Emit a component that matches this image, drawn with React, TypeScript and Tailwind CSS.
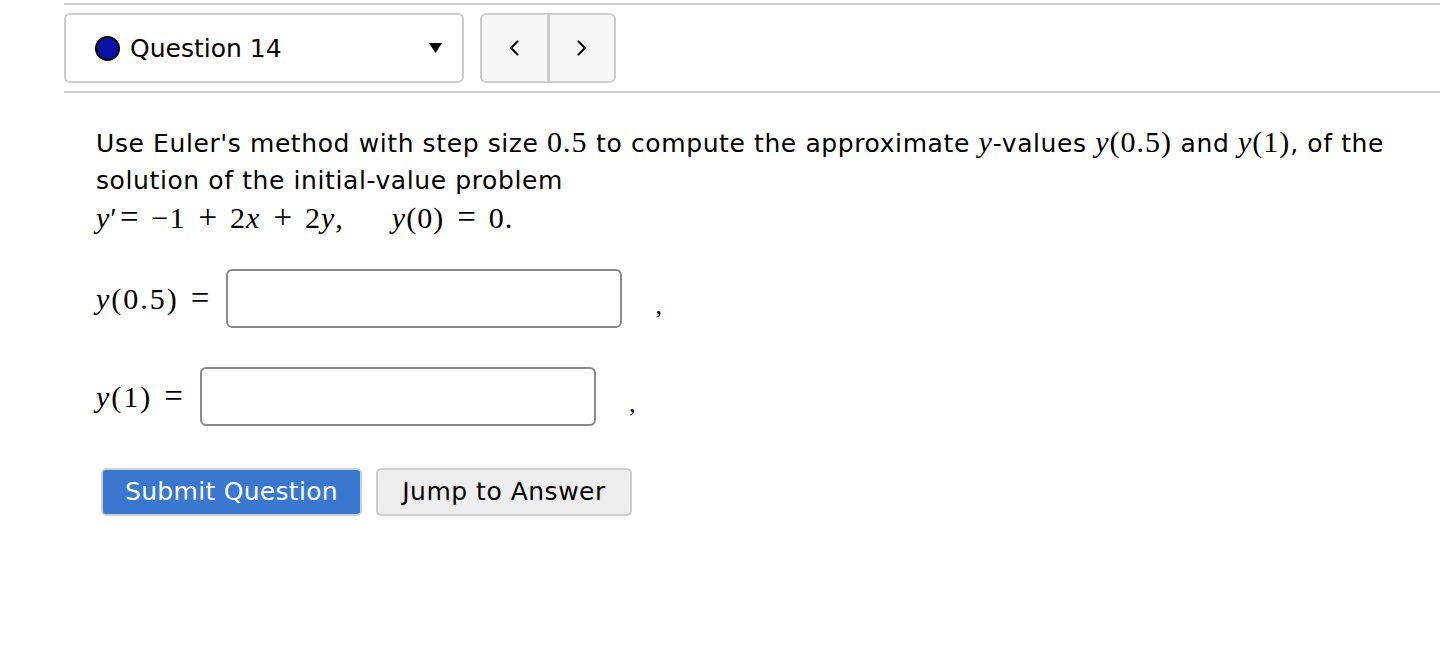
import React from "react";

const sans = "font-['DejaVu_Sans',sans-serif]";
const math = "font-['Liberation_Serif',serif]";

function M({ children }: { children: React.ReactNode }) {
  return <span className={`${math} text-[30px] tracking-[1px]`}>{children}</span>;
}
function I({ children }: { children: React.ReactNode }) {
  return <span className="italic">{children}</span>;
}
function Op({ children, l = "ml-[13px]" }: { children: React.ReactNode; l?: string }) {
  return <span className={`${l} mr-[13px] text-[33px] tracking-normal`}>{children}</span>;
}

export default function App() {
  return (
    <div className={`min-h-[648px] w-[1440px] bg-white text-black ${sans}`}>
      <div className="pl-16 pt-[3px]">
        <div className="h-[2px] bg-[#cccccc]" />
        <div className="flex items-center gap-4 py-2">
          <div className="flex h-[70px] w-[400px] items-center rounded-[6px] border-2 border-[#cccccc] pl-[29px] pr-[20px]">
            <span className="h-[25px] w-[25px] rounded-full border-[2.5px] border-black bg-[#0812a8]" />
            <span className="ml-[10px] text-[25px] leading-none">Question 14</span>
            <svg className="ml-auto" width="13" height="10" viewBox="0 0 13 10">
              <path d="M0 0 L13 0 L6.5 10 Z" fill="#000" />
            </svg>
          </div>
          <div className="flex h-[70px] w-[136px] overflow-hidden rounded-[6px] border-2 border-[#cccccc] bg-[#f7f7f7]">
            <div className="flex flex-1 items-center justify-center border-r-[3px] border-[#cccccc]">
              <svg width="12" height="18" viewBox="0 0 12 18">
                <path d="M10 2 L3 9 L10 16" stroke="#000" strokeWidth="2" fill="none" />
              </svg>
            </div>
            <div className="flex flex-1 items-center justify-center">
              <svg width="12" height="18" viewBox="0 0 12 18">
                <path d="M2 2 L9 9 L2 16" stroke="#000" strokeWidth="2" fill="none" />
              </svg>
            </div>
          </div>
        </div>
        <div className="h-[2px] bg-[#cccccc]" />
      </div>

      <div className="pl-[96px] pt-[30px]">
        <div className="whitespace-nowrap text-[25px] leading-[37px] tracking-[0.6px]">
          Use Euler's method with step size <M>0.5</M> to compute the approximate <M><I>y</I></M>-values{" "}
          <M><I>y</I>(0.5)</M> and <M><I>y</I>(1)</M>, of the
          <br />
          solution of the initial-value problem
          <br />
          <M>
            <I>y</I>′<Op l="ml-[2px]">=</Op>−1<Op>+</Op>2<I>x</I><Op>+</Op>2<I>y</I>,<span className="ml-[48px]" />
            <I>y</I>(0)<Op>=</Op>0.
          </M>
        </div>

        <div className="mt-[31px] flex items-center">
          <span className={`${math} text-[30px] tracking-[2px]`}>
            <I>y</I>(0.5)<span className="ml-[12px] text-[33px] tracking-normal">=</span>
          </span>
          <input className="ml-[17px] h-[59px] w-[396px] rounded-[6px] border-2 border-[#8a8a8a] bg-white" />
          <span className={`${math} ml-[33px] mt-[14px] text-[26px]`}>,</span>
        </div>

        <div className="mt-[39px] flex items-center">
          <span className={`${math} text-[30px] tracking-[2px]`}>
            <I>y</I>(1)<span className="ml-[12px] text-[33px] tracking-normal">=</span>
          </span>
          <input className="ml-[17px] h-[59px] w-[396px] rounded-[6px] border-2 border-[#8a8a8a] bg-white" />
          <span className={`${math} ml-[33px] mt-[14px] text-[26px]`}>,</span>
        </div>

        <div className="mt-[42px] flex items-center gap-[14px] pl-[5px]">
          <button className="h-[48px] w-[261px] rounded-[5px] border-2 border-[#cfcfcf] bg-[#3a78d0] text-[25px] tracking-[0.3px] text-white">
            Submit Question
          </button>
          <button className="h-[48px] w-[256px] rounded-[5px] border-2 border-[#cfcfcf] bg-[#eeeeee] text-[25px] tracking-[0.5px] text-black">
            Jump to Answer
          </button>
        </div>
      </div>
    </div>
  );
}
